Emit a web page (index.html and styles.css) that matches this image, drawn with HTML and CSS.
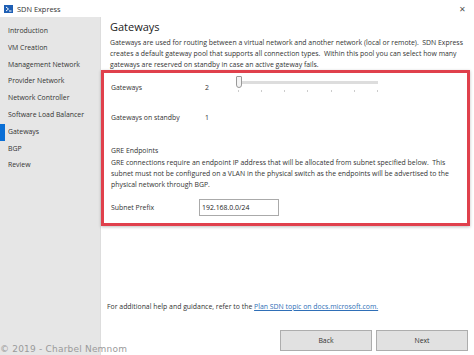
FILE: index.html
```html
<!DOCTYPE html>
<html lang="en">
<head>
    <meta charset="UTF-8">
    <title>SDN Express</title>
    <link rel="stylesheet" href="styles.css">
</head>
<body>
    <div class="titlebar">
        <svg class="app-icon" width="9" height="8" viewBox="0 0 9 8">
            <rect width="9" height="8" fill="#1f5fb4"/>
            <path d="M2 2 L4.5 4 L2 6" stroke="#fff" stroke-width="1" fill="none"/>
            <path d="M5 6 H7.5" stroke="#fff" stroke-width="1"/>
        </svg>
        <span class="app-name">SDN Express</span>
        <span class="close">&#x2715;</span>
    </div>

    <div class="window">
        <nav class="sidebar">
            <div class="nav-item">Introduction</div>
            <div class="nav-item">VM Creation</div>
            <div class="nav-item">Management Network</div>
            <div class="nav-item">Provider Network</div>
            <div class="nav-item">Network Controller</div>
            <div class="nav-item">Software Load Balancer</div>
            <div class="nav-item active">Gateways</div>
            <div class="nav-item">BGP</div>
            <div class="nav-item">Review</div>
        </nav>

        <main class="main">
            <h1>Gateways</h1>
            <p class="intro">Gateways are used for routing between a virtual network and another network (local or remote).&nbsp; SDN Express<br>creates a default gateway pool that supports all connection types.&nbsp; Within this pool you can select how many<br>gateways are reserved on standby in case an active gateway fails.</p>

            <section class="highlight">
                <div class="field-row">
                    <span class="field-label">Gateways</span>
                    <span class="field-value">2</span>
                    <div class="slider">
                        <div class="track"></div>
                        <div class="thumb"></div>
                        <div class="ticks">
                            <i></i><i></i><i></i><i></i><i></i><i></i><i></i>
                        </div>
                    </div>
                </div>
                <div class="field-row standby">
                    <span class="field-label">Gateways on standby</span>
                    <span class="field-value">1</span>
                </div>

                <h2>GRE Endpoints</h2>
                <p class="gre-text">GRE connections require an endpoint IP address that will be allocated from subnet specified below.&nbsp; This<br>subnet must not be configured on a VLAN in the physical switch as the endpoints will be advertised to the<br>physical network through BGP.</p>

                <div class="field-row subnet">
                    <span class="field-label">Subnet Prefix</span>
                    <input class="text-input" type="text" value="192.168.0.0/24">
                </div>
            </section>

            <p class="help">For additional help and guidance, refer to the <a href="#">Plan SDN topic on docs.microsoft.com.</a></p>

            <div class="buttons">
                <button>Back</button>
                <button>Next</button>
            </div>
        </main>
    </div>

    <div class="watermark">&copy; 2019 - Charbel Nemnom</div>
</body>
</html>
```

FILE: styles.css
```css
body {
    margin: 0;
    width: 474px;
    height: 355px;
    overflow: hidden;
    background-color: #fff;
    font-family: "Open Sans", "Noto Sans", sans-serif;
    color: #222;
    position: relative;
}

.titlebar {
    height: 17px;
    display: flex;
    align-items: center;
    padding: 0 4px;
    font-size: 7.4px;
}

.app-icon {
    margin-right: 4px;
}

.app-name {
    flex: 1;
    color: #333;
}

.close {
    font-size: 8px;
    color: #555;
    margin-right: 4px;
}

.window {
    display: flex;
    height: 338px;
}

.sidebar {
    width: 100px;
    background-color: #e6e6e6;
    padding-top: 6px;
    box-sizing: border-box;
}

.nav-item {
    height: 16.8px;
    line-height: 16.8px;
    padding-left: 8px;
    font-size: 6.9px;
    color: #333;
}

.nav-item.active {
    box-shadow: inset 5px 0 0 #0a6fd6;
}

.main {
    flex: 1;
    display: flex;
    flex-direction: column;
    padding: 0 6px 0 9px;
    border-left: 1px solid #ddd;
}

h1 {
    font-size: 11px;
    line-height: 14px;
    font-weight: 400;
    margin: 3px 0 3px;
    color: #222;
}

.intro {
    font-size: 6.9px;
    line-height: 11px;
    margin: 0;
    color: #333;
    white-space: nowrap;
}

.highlight {
    margin: 0 -2px 0 -9px;
    padding: 3px 0 0 7px;
    border: 3px solid #e0404c;
    box-shadow: 0 1px 3px rgba(0, 0, 0, 0.25);
    height: 156px;
    box-sizing: border-box;
}

.field-row {
    display: flex;
    align-items: center;
    height: 22px;
    font-size: 6.9px;
    color: #333;
}

.field-label {
    width: 94px;
}

.field-value {
    width: 31px;
}

.standby {
    margin-top: 8px;
}

.slider {
    position: relative;
    width: 142px;
    height: 22px;
}

.track {
    position: absolute;
    left: 2px;
    right: 0;
    top: 5px;
    height: 3px;
    background-color: #ddd;
}

.thumb {
    position: absolute;
    left: 0;
    top: 0;
    width: 4px;
    height: 10px;
    border: 1px solid #999;
    border-radius: 1px 1px 3px 3px;
    background-color: #f4f4f4;
}

.ticks {
    position: absolute;
    left: 2px;
    right: 0;
    top: 14px;
    display: flex;
    justify-content: space-between;
}

.ticks i {
    width: 1px;
    height: 2px;
    background-color: #ccc;
}

h2 {
    font-size: 6.9px;
    line-height: 11px;
    font-weight: 400;
    margin: 16.5px 0 1px;
    color: #333;
}

.gre-text {
    font-size: 6.9px;
    line-height: 11px;
    margin: 0;
    color: #333;
    white-space: nowrap;
}

.subnet {
    margin-top: 6.5px;
}

.subnet .field-label {
    width: 88px;
}

.text-input {
    width: 80px;
    height: 17px;
    box-sizing: border-box;
    border: 1px solid #aaa;
    padding: 0 2px;
    font-family: inherit;
    font-size: 6.9px;
    color: #222;
}

.help {
    font-size: 6.9px;
    line-height: 10px;
    margin: 76px 0 0 -3px;
    color: #333;
}

.help a {
    color: #2f6fb7;
}

.buttons {
    display: flex;
    justify-content: flex-end;
    gap: 4px;
    margin-top: 18px;
}

.buttons button {
    width: 92px;
    height: 21px;
    background-color: #e1e1e1;
    border: 1px solid #adadad;
    font-family: inherit;
    font-size: 6.9px;
    color: #333;
}

.watermark {
    position: absolute;
    left: 0;
    bottom: 1px;
    font-family: "DejaVu Sans", sans-serif;
    font-size: 9px;
    color: #9a9a9a;
    letter-spacing: 0.2px;
}
```
